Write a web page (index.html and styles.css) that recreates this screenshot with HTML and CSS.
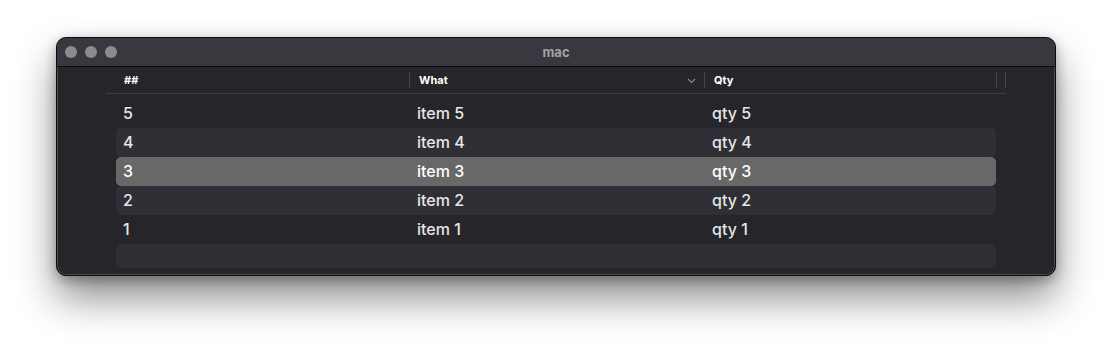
FILE: index.html
```html
<!DOCTYPE html>
<html lang="en">
  <head>
    <meta charset="UTF-8" />
    <meta name="viewport" content="width=device-width, initial-scale=1.0" />
    <title>mac</title>
    <link rel="stylesheet" href="styles.css">
  </head>
  <body>
    <div class="window">
      <div class="titlebar">
        <div class="lights">
          <span class="light"></span>
          <span class="light"></span>
          <span class="light"></span>
        </div>
        <div class="title">mac</div>
      </div>
      <div class="content">
        <div class="table">
          <div class="header">
            <div class="th">##</div>
            <div class="th sep">What
              <svg class="chevron" width="9" height="6" viewBox="0 0 9 6">
                <path d="M1 1 L4.5 4.5 L8 1" fill="none" stroke="#8a8a8f" stroke-width="1.1" />
              </svg>
            </div>
            <div class="th sep">Qty</div>
            <div class="th sep"></div>
            <div class="th sep"></div>
          </div>
          <div class="rows">
            <div class="row"><span>5</span><span>item 5</span><span>qty 5</span></div>
            <div class="row alt"><span>4</span><span>item 4</span><span>qty 4</span></div>
            <div class="row selected"><span>3</span><span>item 3</span><span>qty 3</span></div>
            <div class="row alt"><span>2</span><span>item 2</span><span>qty 2</span></div>
            <div class="row"><span>1</span><span>item 1</span><span>qty 1</span></div>
            <div class="row alt empty"></div>
          </div>
        </div>
      </div>
    </div>
  </body>
</html>
```

FILE: styles.css
```css
html {
  background-color: #ffffff;
}
body {
  margin: 0;
  min-height: 350px;
  box-sizing: border-box;
  padding: 37px 0 0 56px;
  background-color: #ffffff;
  font-family: "Inter", "Liberation Sans", sans-serif;
}
.window {
  width: 998px;
  height: 237px;
  border: 1px solid #0c0c0e;
  border-radius: 10px;
  background-color: #25252a;
  box-shadow: inset 0 0 0 1px #4a4a50, 0 22px 40px rgba(0, 0, 0, 0.45), 0 4px 12px rgba(0, 0, 0, 0.3);
  overflow: hidden;
}
.titlebar {
  position: relative;
  height: 28px;
  background-color: #39383e;
  border-bottom: 1px solid #0c0c0e;
  display: flex;
  align-items: center;
  justify-content: center;
}
.lights {
  position: absolute;
  left: 8px;
  top: 8px;
  display: flex;
  gap: 8px;
}
.light {
  width: 12px;
  height: 12px;
  border-radius: 50%;
  background-color: #8c8b90;
}
.title {
  color: #a3a2a7;
  font-size: 13px;
  font-weight: 700;
}
.table {
  margin: 0 49px 0 49px;
}
.header {
  display: grid;
  grid-template-columns: 303px 295px 292px 9px 1fr;
  height: 26px;
  border-bottom: 1px solid #3c3c41;
  align-items: center;
}
.th {
  position: relative;
  height: 16px;
  line-height: 16px;
  padding-left: 18px;
  color: #ffffff;
  font-size: 11px;
  font-weight: 700;
}
.th.sep {
  border-left: 1px solid #45454a;
  padding-left: 9px;
}
.chevron {
  position: absolute;
  right: 8px;
  top: 6px;
}
.rows {
  padding: 5px 10px 0 10px;
}
.row {
  display: grid;
  grid-template-columns: 294px 295px 1fr;
  height: 29px;
  box-sizing: border-box;
  align-items: center;
  padding: 0 0 2px 7px;
  border-radius: 5px;
  color: #e6e6e8;
  font-size: 16px;
  font-weight: 500;
}
.row.alt {
  background-color: #2f2f35;
}
.row.selected {
  background-color: #686868;
  color: #ffffff;
}
.row.empty {
  height: 24px;
}
```
